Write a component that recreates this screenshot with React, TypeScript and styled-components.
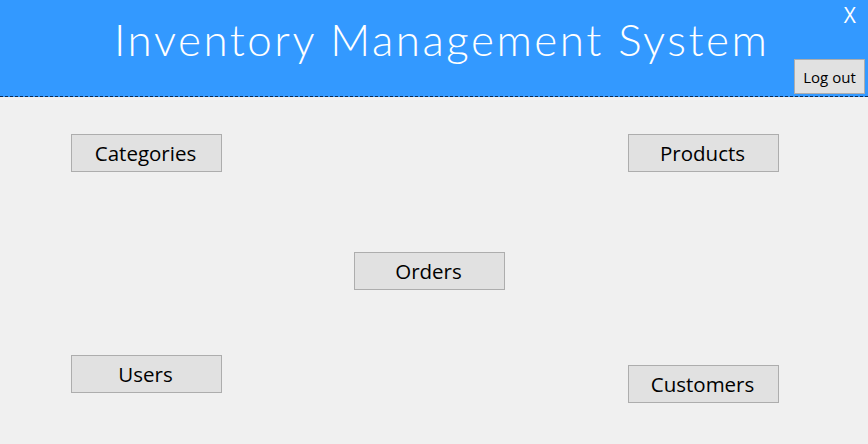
import React from 'react';
import styled, { createGlobalStyle } from 'styled-components';

const GlobalStyle = createGlobalStyle`
  html, body {
    margin: 0;
    padding: 0;
    background: #f0f0f0;
    overflow: hidden;
  }
`;

const Form = styled.div`
  width: 868px;
  height: 444px;
  background: #f0f0f0;
  font-family: 'Open Sans', 'Noto Sans', sans-serif;
`;

const Header = styled.header`
  height: 96px;
  background: #3399ff;
  border-bottom: 1px dashed #0b2c55;
  display: flex;
  align-items: stretch;
`;

const Title = styled.h1`
  flex: 1;
  margin: 0;
  padding: 11px 0 0 114px;
  font-family: 'Lato', 'Liberation Sans', sans-serif;
  font-weight: 300;
  font-size: 44px;
  letter-spacing: 2.5px;
  color: #ffffff;
  line-height: 56px;
  white-space: nowrap;
`;

const Side = styled.div`
  width: 74px;
  display: flex;
  flex-direction: column;
  align-items: flex-end;
  padding-right: 3px;
`;

const CloseMark = styled.span`
  margin: 2px 9px 0 0;
  font-family: 'Open Sans', sans-serif;
  font-size: 21px;
  line-height: 26px;
  color: #ffffff;
  cursor: pointer;
`;

const LogOut = styled.button`
  margin-top: 31px;
  width: 71px;
  height: 35px;
  padding: 0;
  background: #e1e1e1;
  border: 1px solid #adadad;
  font-family: 'Open Sans', sans-serif;
  font-size: 15px;
  color: #000;
`;

const Board = styled.main`
  display: grid;
  grid-template-columns: 151px 132px 151px 123px 151px;
  grid-template-rows: 38px 80px 38px 65px 38px;
  padding: 37px 0 0 71px;
`;

const NavButton = styled.button<{ $col: number; $row: number; $shift?: number }>`
  grid-column: ${({ $col }) => $col};
  grid-row: ${({ $row }) => $row};
  margin-top: ${({ $shift }) => $shift ?? 0}px;
  height: 38px;
  padding: 0 2px 0 0;
  background: #e1e1e1;
  border: 1px solid #adadad;
  font-family: 'Open Sans', sans-serif;
  font-size: 20.5px;
  color: #000;
  cursor: pointer;
`;

export default function App() {
  return (
    <Form>
      <GlobalStyle />
      <Header>
        <Title>Inventory Management System</Title>
        <Side>
          <CloseMark>X</CloseMark>
          <LogOut>Log out</LogOut>
        </Side>
      </Header>
      <Board>
        <NavButton $col={1} $row={1}>Categories</NavButton>
        <NavButton $col={5} $row={1}>Products</NavButton>
        <NavButton $col={3} $row={3}>Orders</NavButton>
        <NavButton $col={1} $row={5}>Users</NavButton>
        <NavButton $col={5} $row={5} $shift={10}>Customers</NavButton>
      </Board>
    </Form>
  );
}
